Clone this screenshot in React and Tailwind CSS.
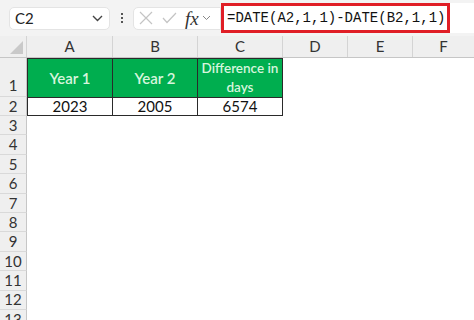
import React from "react";

const cols = [
  { l: "A", w: "w-[86px]" },
  { l: "B", w: "w-[85px]" },
  { l: "C", w: "w-[85px]" },
  { l: "D", w: "w-[65px]" },
  { l: "E", w: "w-[65px]" },
  { l: "F", w: "w-[62px]" },
];

function RowHead({ n, h, bottom }) {
  return (
    <div
      className={`w-[27px] shrink-0 bg-[#efefef] border-r border-r-[#c6c6c6] border-b border-b-[#d9d9d9] flex justify-center text-[15px] text-[#333] ${h} ${bottom ? "items-end" : "items-center"}`}
    >
      {n}
    </div>
  );
}

export default function App() {
  const rows = [3, 4, 5, 6, 7, 8, 9, 10, 11, 12, 13];
  return (
    <div className="w-[474px] h-[320px] overflow-hidden bg-white" style={{ fontFamily: 'Lato, "Open Sans", "Liberation Sans", sans-serif' }}>
      {/* top bar */}
      <div className="h-[36px] bg-[#f3f3f3] flex items-center relative">
        <div className="ml-[9px] w-[101px] h-[23px] bg-white rounded-[5px] border border-[#e4e4e4] flex items-center justify-between pl-[5px] pr-[6px]">
          <span className="text-[15px] text-[#222] leading-none">C2</span>
          <svg width="11" height="7" viewBox="0 0 11 7"><path d="M1 1l4.5 4.5L10 1" fill="none" stroke="#444" strokeWidth="1.4" /></svg>
        </div>
        <div className="w-[23px] flex flex-col items-center gap-[2px]">
          <span className="w-[2px] h-[2px] bg-[#555]" />
          <span className="w-[2px] h-[2px] bg-[#555]" />
          <span className="w-[2px] h-[2px] bg-[#555]" />
        </div>
        <div className="w-[88px] h-[23px] bg-white rounded-l-[5px] border border-[#e4e4e4] flex items-center pl-[5px]">
          <svg width="14" height="14" viewBox="0 0 14 14"><path d="M1 1l12 12M13 1L1 13" stroke="#c4c4c4" strokeWidth="1.2" /></svg>
          <svg className="ml-[9px]" width="15" height="12" viewBox="0 0 15 12"><path d="M1 6l4 4.5L14 1" fill="none" stroke="#c4c4c4" strokeWidth="1.2" /></svg>
          <span className="ml-[8px] text-[19px] italic text-[#333] leading-none" style={{ fontFamily: '"Liberation Serif", serif' }}>fx</span>
          <svg className="ml-[3px]" width="9" height="6" viewBox="0 0 9 6"><path d="M1 1l3.5 3.5L8 1" fill="none" stroke="#888" strokeWidth="1" /></svg>
        </div>
        <div className="flex-1 h-[30px] bg-white flex items-center">
          <div className="w-[229px] h-[30px] border-[3px] border-[#e01e26] flex items-center pl-[3px] text-[14px] text-[#111]" style={{ fontFamily: '"Liberation Mono", "DejaVu Sans Mono", monospace' }}>
            =DATE(A2,1,1)-DATE(B2,1,1)
          </div>
        </div>
      </div>
      {/* column headers */}
      <div className="flex h-[22px] bg-[#efefef] border-b border-[#c6c6c6]">
        <div className="w-[27px] shrink-0 border-r border-[#d4d4d4] flex items-end justify-end pr-[3px] pb-[3px]">
          <svg width="13" height="13" viewBox="0 0 13 13"><path d="M13 0V13H0Z" fill="#c9c9c9" /></svg>
        </div>
        {cols.map((c) => (
          <div key={c.l} className={`${c.w} shrink-0 border-r border-[#d4d4d4] flex items-center justify-center text-[15px] text-[#333]`}>
            {c.l}
          </div>
        ))}
      </div>
      {/* row 1 */}
      <div className="flex h-[39px]">
        <RowHead n="1" h="h-[39px]" bottom />
        <div className="w-[86px] shrink-0 bg-[#00ae4f] border-l border-t border-r border-[#2a2a2a] flex items-center justify-center text-[15px] font-semibold text-[#d6f5dd]">Year 1</div>
        <div className="w-[85px] shrink-0 bg-[#00ae4f] border-t border-r border-[#2a2a2a] flex items-center justify-center text-[15px] font-semibold text-[#d6f5dd]">Year 2</div>
        <div className="w-[85px] shrink-0 bg-[#00ae4f] border-t border-r border-[#2a2a2a] flex flex-col items-center justify-center text-center text-[13.5px] font-semibold leading-[19px] text-[#d6f5dd] whitespace-nowrap">
          <span>Difference in</span>
          <span>days</span>
        </div>
      </div>
      {/* row 2 */}
      <div className="flex h-[19px]">
        <RowHead n="2" h="h-[19px]" />
        <div className="w-[86px] shrink-0 border border-[#2a2a2a] flex items-center justify-center text-[15px] text-[#111]">2023</div>
        <div className="w-[85px] shrink-0 border-t border-b border-r border-[#2a2a2a] flex items-center justify-center text-[15px] text-[#111]">2005</div>
        <div className="w-[85px] shrink-0 border-t border-b border-r border-[#2a2a2a] flex items-center justify-center text-[15px] text-[#111]">6574</div>
      </div>
      {rows.map((r) => (
        <div key={r} className="flex h-[19.4px]">
          <RowHead n={String(r)} h="h-[19.4px]" />
        </div>
      ))}
    </div>
  );
}
